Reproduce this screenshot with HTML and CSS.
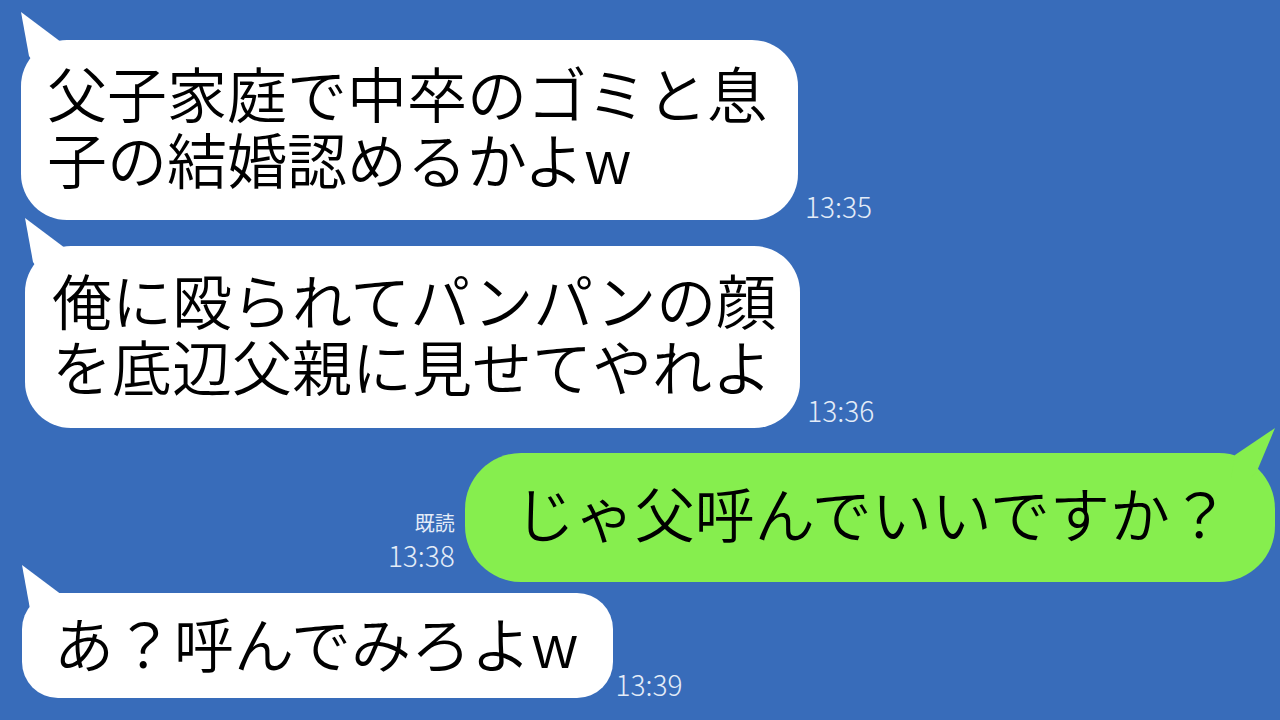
FILE: index.html
```html
<!doctype html>
<html lang="ja">
    <head>
        <meta charset="utf-8">
        <title>トーク</title>
        <link rel="stylesheet" href="styles.css">
    </head>
    <body>
        <div class="chat">
            <div class="row row-in first">
                <div class="bubble bubble-in b1">父子家庭で中卒のゴミと息<br>子の結婚認めるかよw</div>
                <span class="time t1">13:35</span>
            </div>
            <div class="row row-in second">
                <div class="bubble bubble-in b2">俺に殴られてパンパンの顔<br>を底辺父親に見せてやれよ</div>
                <span class="time t2">13:36</span>
            </div>
            <div class="row row-out third">
                <div class="meta">
                    <span class="read">既読</span>
                    <span class="time">13:38</span>
                </div>
                <div class="bubble bubble-out b3">じゃ父呼んでいいですか？</div>
            </div>
            <div class="row row-in fourth">
                <div class="bubble bubble-in b4">あ？呼んでみろよw</div>
                <span class="time t4">13:39</span>
            </div>
        </div>
    </body>
</html>
```

FILE: styles.css
```css
body {
    margin: 0;
    background-color: #386cba;
    font-family: "Noto Sans CJK JP", "Noto Sans", sans-serif;
    width: 1280px;
    height: 720px;
    overflow: hidden;
}
.chat {
    display: flex;
    flex-direction: column;
    padding: 40px 5px 0 21px;
}
.row {
    display: flex;
    align-items: flex-end;
}
.row-out {
    justify-content: flex-end;
}
.second {
    margin-top: 26px;
}
.third {
    margin-top: 25px;
}
.fourth {
    margin-top: 11px;
}
.bubble {
    position: relative;
    font-size: 60px;
    font-weight: 350;
    line-height: 66px;
    color: #000;
    white-space: nowrap;
    background-color: #fff;
}
.bubble::before {
    content: "";
    position: absolute;
    width: 44px;
    height: 50px;
    background-color: inherit;
}
.bubble-in::before {
    left: -4px;
    top: -28px;
    clip-path: polygon(4px 0, 44px 30px, 40px 50px, 16px 50px, 12px 44px);
}
.bubble-out {
    background-color: #86ee4e;
}
.bubble-out::before {
    right: 0;
    top: -25px;
    clip-path: polygon(44px 0, 26px 43px, 20px 50px, 0 50px, 4px 27px);
}
.b1 {
    padding: 19px 31px 29px 26px;
    border-radius: 46px;
}
.b2 {
    margin-left: 4px;
    padding: 20px 24px 30px 27px;
    border-radius: 46px;
}
.b3 {
    padding: 26px 45px 37px 50px;
    border-radius: 56px;
}
.b4 {
    margin-left: 1px;
    padding: 16px 34px 23px 32px;
    border-radius: 36px;
}
.time {
    font-size: 28px;
    font-weight: 300;
    line-height: 1;
    color: #e4ecf8;
    margin-left: 7px;
}
.t1 {
    margin-bottom: 0;
}
.t2 {
    margin-bottom: 4px;
}
.t4 {
    margin-left: 3px;
}
.meta {
    display: flex;
    flex-direction: column;
    align-items: flex-end;
    margin: 0 10px 13px 0;
}
.meta .time {
    margin-left: 0;
}
.read {
    font-size: 20px;
    line-height: 1;
    color: #e4ecf8;
    margin-bottom: 8px;
}
```
